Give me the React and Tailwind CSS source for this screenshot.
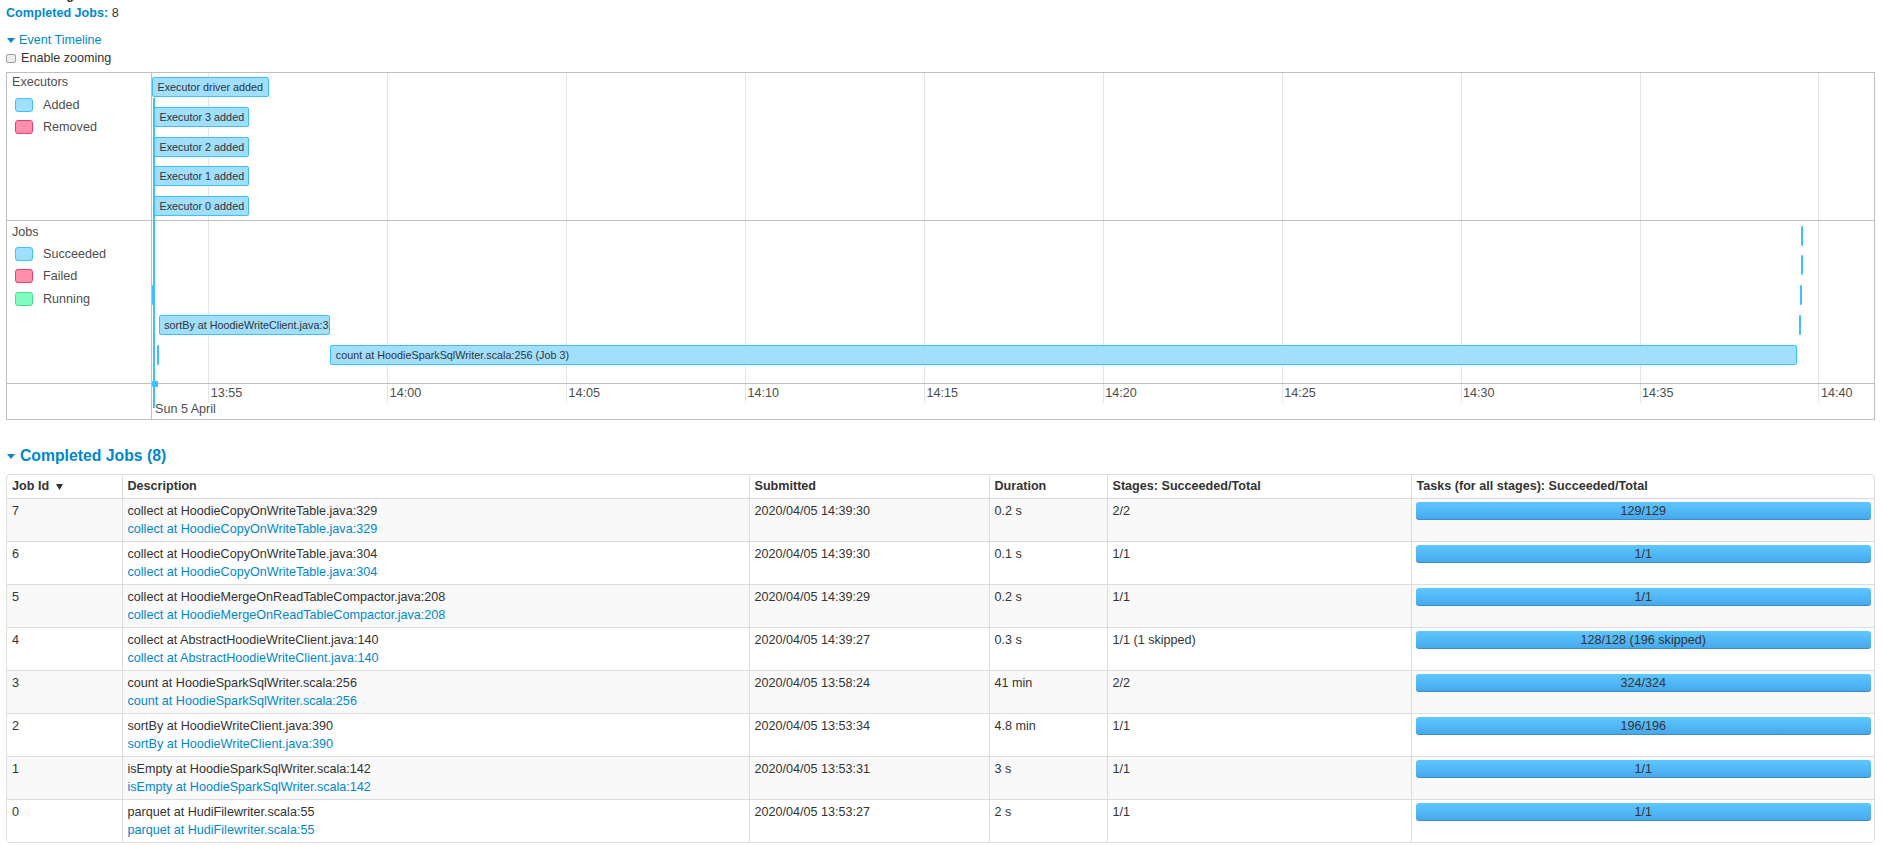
const gridXs = Array.from({ length: 10 }, (_, i) => 56.3 + i * 178.9);
const ticks = ["13:55", "14:00", "14:05", "14:10", "14:15", "14:20", "14:25", "14:30", "14:35", "14:40"];

const executors = [
  { label: "Executor driver added", left: 0, top: 4, width: 117 },
  { label: "Executor 3 added", left: 2, top: 34, width: 95 },
  { label: "Executor 2 added", left: 2, top: 64, width: 95 },
  { label: "Executor 1 added", left: 2, top: 93, width: 95 },
  { label: "Executor 0 added", left: 2, top: 123, width: 95 },
];

const jobItems = [
  { left: 1648.5, top: 5, width: 2 },
  { left: 1648.5, top: 34, width: 2 },
  { left: 1648, top: 64, width: 2 },
  { left: 1647.3, top: 94, width: 2 },
  { left: 0.3, top: 64, width: 2.5 },
  { left: 4.5, top: 124, width: 2 },
  { label: "sortBy at HoodieWriteClient.java:390 (Job 2)", left: 6.7, top: 94, width: 171 },
  { label: "count at HoodieSparkSqlWriter.scala:256 (Job 3)", left: 178.3, top: 124, width: 1467 },
];

const jobs = [
  { id: 7, name: "collect at HoodieCopyOnWriteTable.java:329", submitted: "2020/04/05 14:39:30", duration: "0.2 s", stages: "2/2", tasks: "129/129" },
  { id: 6, name: "collect at HoodieCopyOnWriteTable.java:304", submitted: "2020/04/05 14:39:30", duration: "0.1 s", stages: "1/1", tasks: "1/1" },
  { id: 5, name: "collect at HoodieMergeOnReadTableCompactor.java:208", submitted: "2020/04/05 14:39:29", duration: "0.2 s", stages: "1/1", tasks: "1/1" },
  { id: 4, name: "collect at AbstractHoodieWriteClient.java:140", submitted: "2020/04/05 14:39:27", duration: "0.3 s", stages: "1/1 (1 skipped)", tasks: "128/128 (196 skipped)" },
  { id: 3, name: "count at HoodieSparkSqlWriter.scala:256", submitted: "2020/04/05 13:58:24", duration: "41 min", stages: "2/2", tasks: "324/324" },
  { id: 2, name: "sortBy at HoodieWriteClient.java:390", submitted: "2020/04/05 13:53:34", duration: "4.8 min", stages: "1/1", tasks: "196/196" },
  { id: 1, name: "isEmpty at HoodieSparkSqlWriter.scala:142", submitted: "2020/04/05 13:53:31", duration: "3 s", stages: "1/1", tasks: "1/1" },
  { id: 0, name: "parquet at HudiFilewriter.scala:55", submitted: "2020/04/05 13:53:27", duration: "2 s", stages: "1/1", tasks: "1/1" },
];

const Arrow = ({ className }) => (
  <svg width="8" height="5" viewBox="0 0 8 5" className={className}>
    <path d="M0 0h8l-4 5z" fill="#0088cc" />
  </svg>
);

const Legend = ({ label, box, tall }) => (
  <div className={`flex items-center ${tall ? "h-[22.5px]" : "h-[22px]"}`}>
    <span className={`ml-[8px] h-[14px] w-[18px] rounded-[3px] border-[1.5px] ${box}`}></span>
    <span className="ml-[10px]">{label}</span>
  </div>
);

const GridLines = () => (
  <>
    {gridXs.map((x) => (
      <div key={x} className="absolute top-0 bottom-0 w-px bg-[#e5e5e5]" style={{ left: x }}></div>
    ))}
  </>
);

const Item = ({ item }) =>
  item.label ? (
    <div
      className="absolute z-10 flex h-[20px] items-center overflow-hidden whitespace-nowrap rounded-[2px] border border-[#3ec0ff] bg-[#a0dfff] px-[4.5px] text-[10.8px] text-[#333]"
      style={{ left: item.left, top: item.top, width: item.width }}
    >
      {item.label}
    </div>
  ) : (
    <div
      className="absolute z-10 h-[20px] rounded-[1px] bg-[#3ec0ff]"
      style={{ left: item.left, top: item.top, width: item.width }}
    ></div>
  );

const App = () => {
  return (
    <div className="min-h-screen overflow-hidden bg-white pl-[6px] pr-[12px] font-['Liberation_Sans',Arial,sans-serif] text-[12.6px] leading-[18px] text-[#333]">
      <ul className="-mt-[14px]">
        <li>
          <strong>Scheduling Mode:</strong> FIFO
        </li>
        <li>
          <strong className="text-[#0088cc]">Completed Jobs:</strong> 8
        </li>
      </ul>

      <div className="mt-[9px] flex h-[18px] items-center text-[#0088cc]">
        <Arrow className="ml-[1px] mr-[4px]" />
        Event Timeline
      </div>
      <div className="flex h-[18px] items-center">
        <span className="mt-[1px] h-[9px] w-[10px] rounded-[2px] border border-[#a0a0a0] bg-[#ececec]"></span>
        <span className="ml-[5px]">Enable zooming</span>
      </div>

      {/* timeline */}
      <div className="mt-[5px] flex border border-[#bfbfbf]">
        <div className="w-[145px] shrink-0 border-r border-[#bfbfbf] text-[#4d4d4d]">
          <div className="h-[148px] border-b border-[#bfbfbf]">
            <div className="pl-[5px]">Executors</div>
            <div className="mt-[3px]">
              <Legend label="Added" box="border-[#3ec0ff] bg-[#a0dfff]" />
              <Legend label="Removed" box="border-[#ea3e6c] bg-[#ff8fab]" />
            </div>
          </div>
          <div className="h-[163px] border-b border-[#bfbfbf] pt-[1.5px]">
            <div className="pl-[5px]">Jobs</div>
            <div className="mt-[2px]">
              <Legend tall label="Succeeded" box="border-[#3ec0ff] bg-[#a0dfff]" />
              <Legend tall label="Failed" box="border-[#ea3e6c] bg-[#ff8fab]" />
              <Legend tall label="Running" box="border-[#3ee08c] bg-[#82fcbd]" />
            </div>
          </div>
          <div className="h-[35px]"></div>
        </div>

        <div className="relative flex-1">
          <div className="relative h-[148px] border-b border-[#bfbfbf]">
            <GridLines />
            {executors.map((e) => (
              <Item key={e.label} item={e} />
            ))}
          </div>
          <div className="relative h-[163px] border-b border-[#bfbfbf]">
            <GridLines />
            {jobItems.map((j, i) => (
              <Item key={i} item={j} />
            ))}
          </div>
          <div className="relative h-[35px] text-[#4d4d4d]">
            {gridXs.map((x, i) => (
              <div key={x}>
                <div className="absolute top-0 h-[19px] w-px bg-[#e5e5e5]" style={{ left: x }}></div>
                <div className="absolute top-0" style={{ left: x + 2.5 }}>
                  {ticks[i]}
                </div>
              </div>
            ))}
            <div className="absolute left-[3px] top-[16px]">Sun 5 April</div>
          </div>

          {/* executor box line down to the axis */}
          <div className="absolute left-[0.5px] top-[25px] z-20 h-[310px] w-[2px] bg-[#3ec0ff]"></div>
          <div className="absolute left-0 top-[308px] z-20 h-[6px] w-[6px] rounded-[1px] bg-[#3ec0ff]"></div>
        </div>
      </div>

      {/* completed jobs */}
      <div className="mt-[26px] flex h-[20px] items-center text-[15.75px] font-bold text-[#0088cc]">
        <Arrow className="ml-[1px] mr-[5px]" />
        Completed Jobs (8)
      </div>
      <div className="mt-[8px] overflow-hidden rounded-[4px] border border-[#ddd]">
        <table className="w-full table-fixed border-collapse">
          <colgroup>
            <col className="w-[115px]" />
            <col className="w-[627px]" />
            <col className="w-[240px]" />
            <col className="w-[118px]" />
            <col className="w-[304px]" />
            <col />
          </colgroup>
          <thead>
            <tr className="text-left">
              <th className="px-[5px] pt-[3px] pb-[3px] leading-[17px] font-bold">
                <span className="inline-flex items-center">
                  Job Id
                  <svg width="7" height="6" viewBox="0 0 7 6" className="ml-[7px]">
                    <path d="M0 0h7l-3.5 6z" fill="#333" />
                  </svg>
                </span>
              </th>
              <th className="border-l border-[#ddd] px-[5px] pt-[3px] pb-[3px] leading-[17px] font-bold">Description</th>
              <th className="border-l border-[#ddd] px-[5px] pt-[3px] pb-[3px] leading-[17px] font-bold">Submitted</th>
              <th className="border-l border-[#ddd] px-[5px] pt-[3px] pb-[3px] leading-[17px] font-bold">Duration</th>
              <th className="border-l border-[#ddd] px-[5px] pt-[3px] pb-[3px] leading-[17px] font-bold">Stages: Succeeded/Total</th>
              <th className="border-l border-[#ddd] px-[5px] pt-[3px] pb-[3px] leading-[17px] font-bold">Tasks (for all stages): Succeeded/Total</th>
            </tr>
          </thead>
          <tbody>
            {jobs.map((job, i) => (
              <tr key={job.id} className={`border-t border-[#ddd] align-top ${i % 2 === 0 ? "bg-[#f9f9f9]" : "bg-white"}`}>
                <td className="px-[5px] pt-[4px] pb-[3px] leading-[17.5px]">{job.id}</td>
                <td className="border-l border-[#ddd] px-[5px] pt-[4px] pb-[3px] leading-[17.5px]">
                  <div>{job.name}</div>
                  <div className="text-[#0088cc]">{job.name}</div>
                </td>
                <td className="border-l border-[#ddd] px-[5px] pt-[4px] pb-[3px] leading-[17.5px]">{job.submitted}</td>
                <td className="border-l border-[#ddd] px-[5px] pt-[4px] pb-[3px] leading-[17.5px]">{job.duration}</td>
                <td className="border-l border-[#ddd] px-[5px] pt-[4px] pb-[3px] leading-[17.5px]">{job.stages}</td>
                <td className="border-l border-[#ddd] pl-[4px] pr-[3px] pt-[3px] leading-[17.5px]">
                  <div className="h-[18px] rounded-[3px] bg-linear-to-b from-[#5ec7ff] to-[#45a7ec] text-center leading-[18px] text-[#333] shadow-[inset_0_-1px_0_rgba(0,0,0,0.15)]">
                    {job.tasks}
                  </div>
                </td>
              </tr>
            ))}
          </tbody>
        </table>
      </div>
    </div>
  );
};

export default App;
